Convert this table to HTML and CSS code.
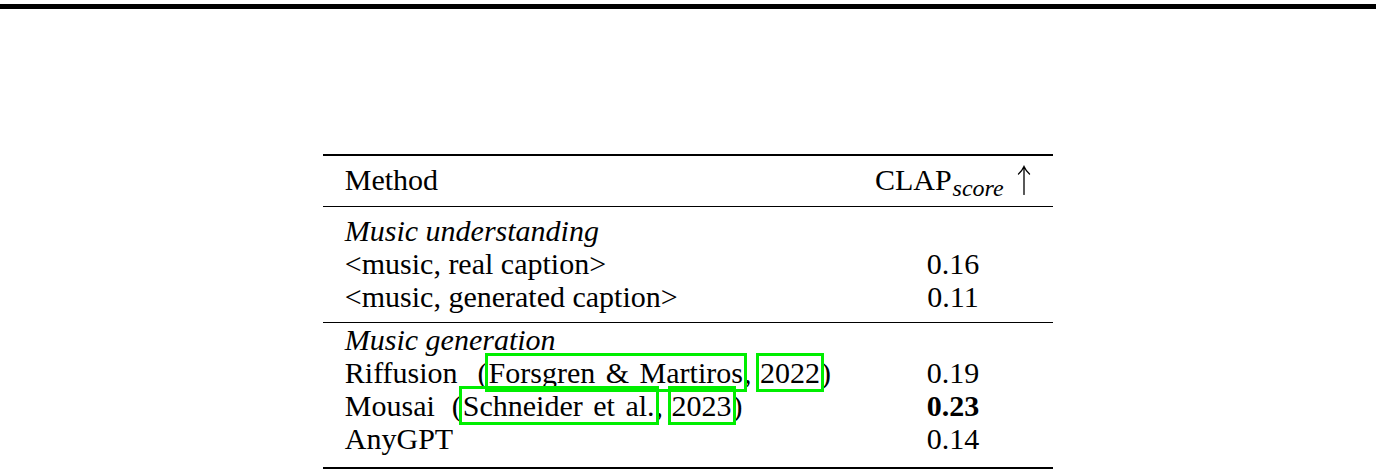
FILE: index.html
```html
<!DOCTYPE html>
<html lang="en">
<head>
<meta charset="utf-8">
<title>CLAP score table</title>
<link rel="stylesheet" href="styles.css">
</head>
<body>
<div class="topbar"></div>
<main class="page">
  <table class="results">
    <thead>
      <tr>
        <th class="col-method">Method</th>
        <th class="col-score">CLAP<sub class="sub">score</sub> <svg class="uparrow" viewBox="0 0 14 30" width="14" height="30" aria-label="higher is better"><path d="M7 2.5 V29.5 M1.5 9 Q5 6 7 1.5 Q9 6 12.5 9" fill="none" stroke="#000" stroke-width="1.3" stroke-linecap="round"/></svg></th>
      </tr>
    </thead>
    <tbody class="group group-a">
      <tr class="group-head">
        <td><em>Music understanding</em></td>
        <td class="num"></td>
      </tr>
      <tr>
        <td>&lt;music, real caption&gt;</td>
        <td class="num">0.16</td>
      </tr>
      <tr class="group-tail">
        <td>&lt;music, generated caption&gt;</td>
        <td class="num">0.11</td>
      </tr>
    </tbody>
    <tbody class="group group-b">
      <tr class="group-head">
        <td><em>Music generation</em></td>
        <td class="num"></td>
      </tr>
      <tr>
        <td>Riffusion&nbsp; <span class="refs refs-wide">(<span class="cite">Forsgren &amp; Martiros</span>, <span class="cite">2022</span>)</span></td>
        <td class="num">0.19</td>
      </tr>
      <tr>
        <td>Mousai&nbsp; <span class="refs">(<span class="cite">Schneider et al.</span>, <span class="cite">2023</span>)</span></td>
        <td class="num"><strong>0.23</strong></td>
      </tr>
      <tr class="group-tail">
        <td>AnyGPT</td>
        <td class="num">0.14</td>
      </tr>
    </tbody>
  </table>
</main>
</body>
</html>
```

FILE: styles.css
```css
html, body {
  margin: 0;
  padding: 0;
  background: #fff;
}

body {
  font-family: "Liberation Serif", "DejaVu Serif", serif;
  color: #000;
}

.topbar {
  height: 5px;
  margin-top: 4px;
  background: #000;
}

.page {
  display: flex;
  justify-content: center;
  padding-top: 145px;
}

.results {
  width: 730px;
  border-collapse: separate;
  border-spacing: 0;
  font-family: "Liberation Serif", "DejaVu Serif", serif;
  font-size: 30px;
  line-height: 33px;
}

.results th,
.results td {
  font-family: "Liberation Serif", "DejaVu Serif", serif;
  padding: 0 22px;
  font-weight: normal;
  white-space: nowrap;
  vertical-align: baseline;
}

.results th {
  border-top: 2px solid #000;
  border-bottom: 1px solid #000;
  padding-top: 7px;
  padding-bottom: 10px;
}

.col-method {
  text-align: left;
}

.col-score {
  text-align: center;
  width: 1%;
}

.sub {
  font-size: 24px;
  font-style: italic;
  line-height: 0;
  vertical-align: -6px;
  margin-left: 1px;
  margin-right: 6px;
}

.uparrow {
  vertical-align: -5px;
}

.num {
  text-align: center;
}

.num strong {
  font-weight: bold;
}

.group-a .group-head td {
  padding-top: 7px;
}

.group-a .group-tail td {
  padding-bottom: 9px;
}

.group-b .group-head td {
  border-top: 1px solid #000;
}

.group-b .group-tail td {
  padding-bottom: 12px;
  border-bottom: 2px solid #000;
}

.refs {
  margin-left: 2px;
}

.refs-wide {
  margin-left: 5px;
}

.cite {
  outline: 3px solid #00ee00;
  outline-offset: 0;
  padding: 0 1px;
  word-spacing: 3px;
}
```
